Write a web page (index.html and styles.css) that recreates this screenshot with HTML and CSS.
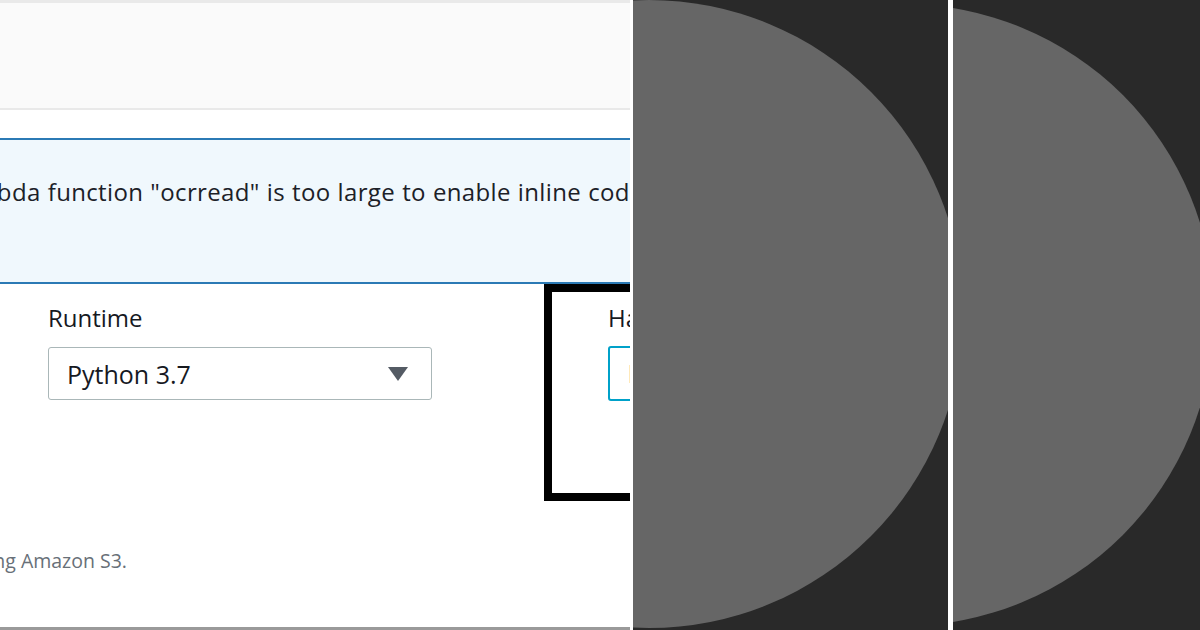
FILE: index.html
```html
<!DOCTYPE html>
<html lang="en">
<head>
    <meta charset="UTF-8">
    <meta name="viewport" content="width=device-width, initial-scale=1.0">
    <title>ocrread - Lambda</title>
    <link rel="stylesheet" href="styles.css">
</head>
<body>
    <div class="shot">
        <div class="topbar"></div>
        <div class="alert">
            <p class="alert-text">The deployment package of your Lambda function "ocrread" is too large to enable inline code editing. However, you can still invoke your function.</p>
        </div>
        <div class="config">
            <div class="field">
                <label class="field-label">Runtime</label>
                <div class="select">
                    <span>Python 3.7</span>
                    <svg class="caret" width="20" height="14" viewBox="0 0 20 14"><polygon points="0,0 20,0 10,14" fill="#545b64"/></svg>
                </div>
            </div>
            <div class="highlight">
                <label class="field-label">Handler</label>
                <div class="input">lambda_function.lambda_handler</div>
            </div>
        </div>
        <div class="hint">
            <span>For files larger than 10 MB, consider uploading using Amazon S3.</span>
        </div>
    </div>

    <div class="frame frame-one">
        <svg viewBox="0 0 315 630" preserveAspectRatio="none">
            <circle cx="16" cy="314" r="314" fill="#666"/>
        </svg>
    </div>

    <div class="frame frame-two">
        <svg viewBox="0 0 247 630" preserveAspectRatio="none">
            <circle cx="-50" cy="315" r="311" fill="#666"/>
        </svg>
    </div>
</body>
</html>
```
FILE: styles.css
```css
html, body {
    margin: 0;
    height: 100%;
    background-color: #fff;
}

body {
    display: flex;
    width: 1200px;
    height: 630px;
    overflow: hidden;
    font-family: "Open Sans", Lato, sans-serif;
}

.shot {
    width: 630px;
    height: 630px;
    flex-shrink: 0;
    display: flex;
    flex-direction: column;
    overflow: hidden;
    box-sizing: border-box;
    border-bottom: 3px solid #9a9a9a;
    background-color: #fff;
    color: #16191f;
}

.topbar {
    height: 105px;
    flex-shrink: 0;
    background-color: #fafafa;
    border-top: 3px solid #e9e9e9;
    border-bottom: 2px solid #e9e9e9;
}

.alert {
    margin-top: 28px;
    height: 142px;
    flex-shrink: 0;
    background-color: #f0f8fd;
    border-top: 2px solid #2b7ab5;
    border-bottom: 2px solid #2b7ab5;
}

.alert-text {
    margin: 37px 0 0 -438px;
    font-size: 24px;
    letter-spacing: 0.35px;
    word-spacing: 0.5px;
    line-height: 30px;
    white-space: nowrap;
    color: #1c2128;
}

.config {
    display: flex;
    height: 217px;
    flex-shrink: 0;
    padding-left: 48px;
}

.field {
    width: 384px;
    flex-shrink: 0;
    padding-top: 20px;
}

.field-label {
    display: block;
    font-size: 24px;
    line-height: 28px;
    color: #16191f;
}

.select {
    display: flex;
    align-items: center;
    justify-content: space-between;
    height: 51px;
    margin-top: 15px;
    padding: 0 23px 0 18px;
    border: 1px solid #aab7b8;
    border-radius: 3px;
    font-size: 25px;
}

.highlight {
    margin-left: 112px;
    flex: 1;
    padding: 12px 0 0 56px;
    border: 8px solid #000;
    white-space: nowrap;
}

.highlight .input {
    height: 51px;
    margin-top: 14px;
    padding-left: 18px;
    border: 2px solid #00a1c9;
    border-radius: 3px;
    font-size: 24px;
    line-height: 51px;
}

.hint {
    width: 127px;
    display: flex;
    justify-content: flex-end;
    margin-top: 47px;
    font-size: 19.5px;
    line-height: 26px;
    color: #687078;
    white-space: nowrap;
}

.frame {
    height: 630px;
    flex-shrink: 0;
    overflow: hidden;
    background-color: #292929;
}

.frame svg {
    display: block;
    width: 100%;
    height: 100%;
}

.frame-one {
    width: 315px;
    margin-left: 3px;
}

.frame-two {
    width: 247px;
    margin-left: 5px;
}
```
